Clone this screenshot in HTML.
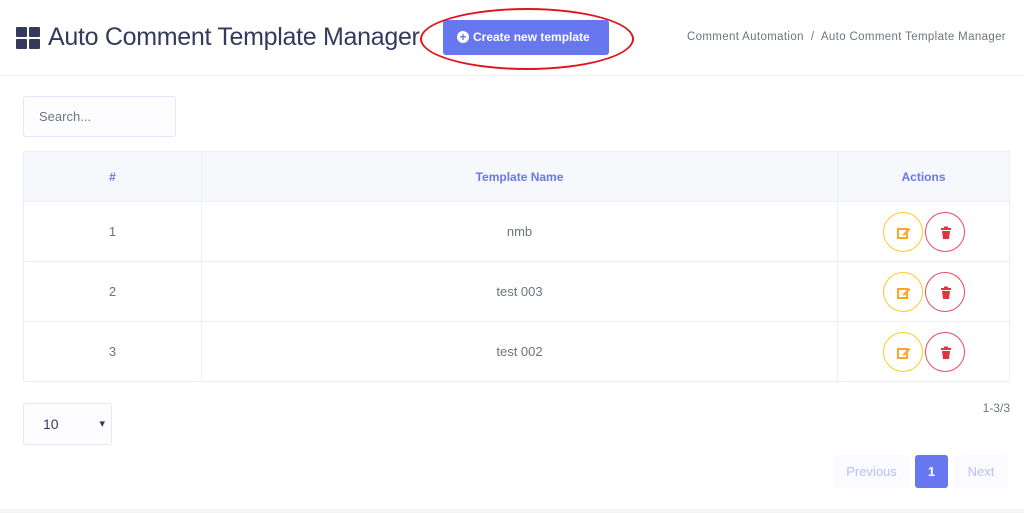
<!DOCTYPE html>
<html><head><meta charset="utf-8"><style>
*{box-sizing:border-box;margin:0;padding:0}
body{width:1024px;height:513px;background:#fff;font-family:"Liberation Sans",sans-serif;position:relative;overflow:hidden;color:#6c757d}
.hdr{position:absolute;left:0;top:0;width:1024px;height:76px;border-bottom:1px solid #f0f0f5}
.title{position:absolute;left:48px;top:23px;font-size:25px;color:#343a5c;letter-spacing:-0.3px}
.logo{position:absolute;left:16px;top:27px;width:24px;height:22px}
.logo i{position:absolute;width:11px;height:10px;background:#343a5c;border-radius:1px}
.btn{position:absolute;left:443px;top:20px;width:166px;height:35px;background:#6777ef;border-radius:3px;color:#fff;font-size:12px;font-weight:bold;line-height:35px;padding-left:30px}
.btn:before{content:"+";position:absolute;left:14px;top:11px;width:12px;height:12px;border-radius:50%;background:#fff;color:#6777ef;font-size:12px;line-height:12px;text-align:center}
.ell{position:absolute;left:420px;top:8px;width:214px;height:62px;border:2px solid #e0141e;border-radius:50%}
.bc{position:absolute;right:18px;top:31px;font-size:11.5px;color:#6c757d;letter-spacing:0.35px}
.search{position:absolute;left:23px;top:96px;width:153px;height:41px;border:1px solid #e4e6fc;background:#fdfdff;border-radius:3px;font-size:13px;line-height:39px;padding-left:15px;color:#6c757d}
table{position:absolute;left:23px;top:151px;width:987px;border-collapse:collapse;font-size:13px}
th{height:50px;background:#f7f8fc;color:#6777ef;font-weight:bold;font-size:12px}
td{height:60px;text-align:center}
th,td{border:1px solid #eceef7}
.c{display:inline-block;width:40px;height:40px;border-radius:50%;vertical-align:middle;margin:0 1px;position:relative}
.e{border:1px solid #ffc928}.d{border:1px solid #e84a5f}
.c svg{position:absolute;left:13px;top:13px}
.sel{position:absolute;left:23px;top:403px;width:89px;height:42px;border:1px solid #e4e6fc;background:#fdfdff;border-radius:3px;font-size:14px;line-height:40px;padding-left:19px;color:#343a5c}
.sel:after{content:"▾";position:absolute;right:6px;font-size:11px}
.cnt{position:absolute;right:14px;top:401px;font-size:12px}
.pg{position:absolute;top:455px;height:33px;line-height:33px;text-align:center;font-size:13px;border-radius:3px}
.foot{position:absolute;left:0;top:509px;width:1024px;height:4px;background:#f4f4f4}
</style></head><body>
<div class="hdr"></div>
<div class="logo"><i style="left:0;top:0"></i><i style="left:13px;top:0"></i><i style="left:0;top:12px"></i><i style="left:13px;top:12px"></i></div>
<div class="title">Auto Comment Template Manager</div>
<div class="btn">Create new template</div>
<div class="ell"></div>
<div class="bc">Comment Automation &nbsp;/&nbsp; Auto Comment Template Manager</div>
<div class="search">Search...</div>
<table>
<tr><th style="width:178px">#</th><th>Template Name</th><th style="width:172px">Actions</th></tr>
<tr><td>1</td><td>nmb</td><td><span class="c e"><svg width="14" height="14" viewBox="0 0 14 14"><rect x="1" y="3" width="9" height="9" fill="none" stroke="#ffa426" stroke-width="2"/><path d="M6 8l6-6 1.5 1.5-6 6H6z" fill="#ffa426"/></svg></span><span class="c d"><svg width="14" height="14" viewBox="0 0 14 14"><rect x="2" y="2" width="10" height="2" fill="#dc3545"/><rect x="5" y="0.5" width="4" height="2" fill="#dc3545"/><path d="M3 5h8l-1 8H4z" fill="#dc3545"/></svg></span></td></tr>
<tr><td>2</td><td>test 003</td><td><span class="c e"><svg width="14" height="14" viewBox="0 0 14 14"><rect x="1" y="3" width="9" height="9" fill="none" stroke="#ffa426" stroke-width="2"/><path d="M6 8l6-6 1.5 1.5-6 6H6z" fill="#ffa426"/></svg></span><span class="c d"><svg width="14" height="14" viewBox="0 0 14 14"><rect x="2" y="2" width="10" height="2" fill="#dc3545"/><rect x="5" y="0.5" width="4" height="2" fill="#dc3545"/><path d="M3 5h8l-1 8H4z" fill="#dc3545"/></svg></span></td></tr>
<tr><td>3</td><td>test 002</td><td><span class="c e"><svg width="14" height="14" viewBox="0 0 14 14"><rect x="1" y="3" width="9" height="9" fill="none" stroke="#ffa426" stroke-width="2"/><path d="M6 8l6-6 1.5 1.5-6 6H6z" fill="#ffa426"/></svg></span><span class="c d"><svg width="14" height="14" viewBox="0 0 14 14"><rect x="2" y="2" width="10" height="2" fill="#dc3545"/><rect x="5" y="0.5" width="4" height="2" fill="#dc3545"/><path d="M3 5h8l-1 8H4z" fill="#dc3545"/></svg></span></td></tr>
</table>
<div class="sel">10</div>
<div class="cnt">1-3/3</div>
<div class="pg" style="left:834px;width:75px;background:#fbfbff;color:#b9bff7">Previous</div>
<div class="pg" style="left:915px;width:33px;background:#6777ef;color:#fff;font-weight:bold">1</div>
<div class="pg" style="left:954px;width:54px;background:#fbfbff;color:#b9bff7">Next</div>
<div class="foot"></div>
</body></html>
